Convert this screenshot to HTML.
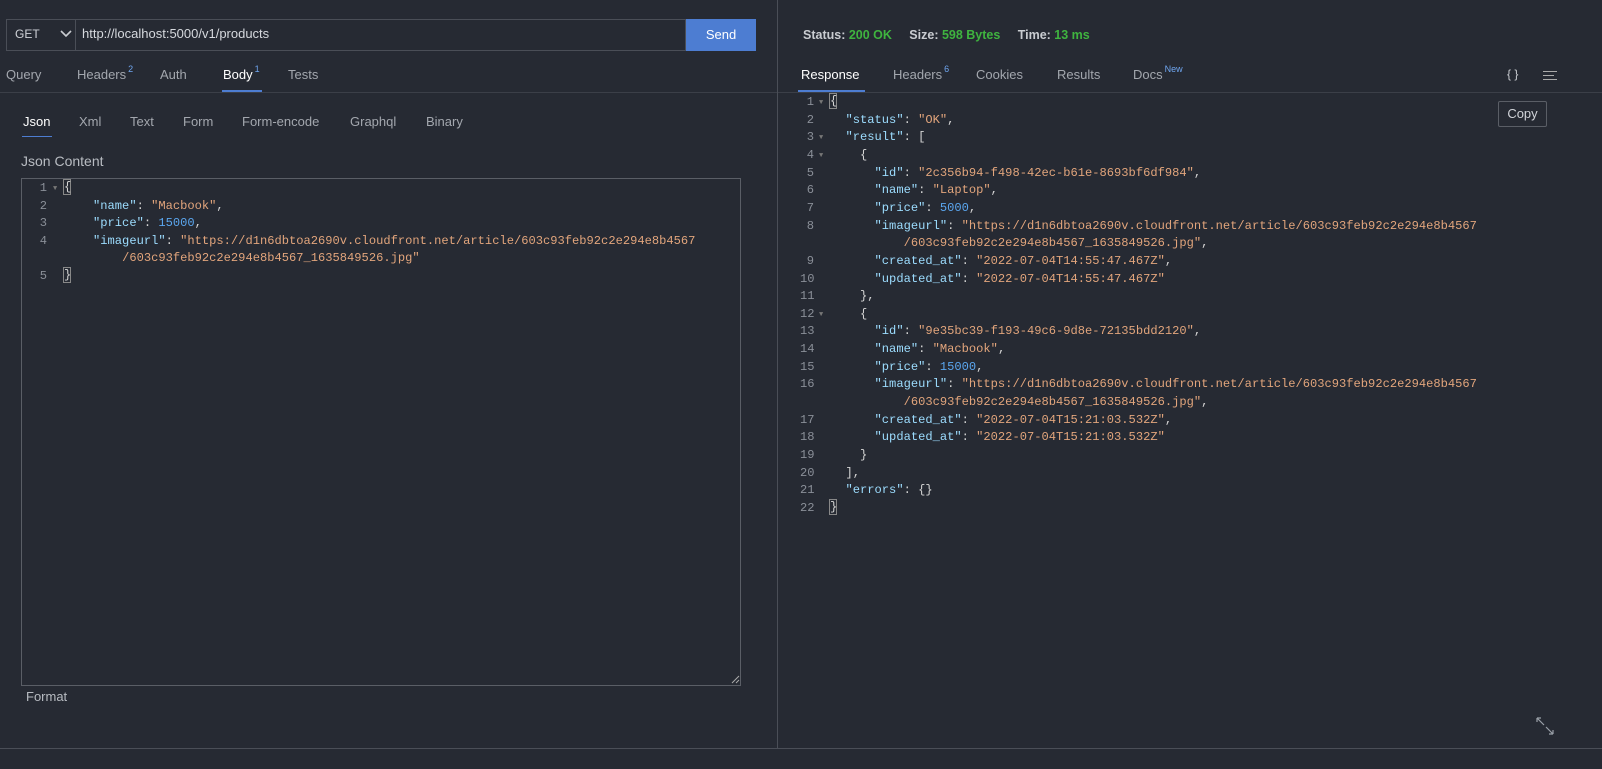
<!DOCTYPE html>
<html><head><meta charset="utf-8"><style>
*{margin:0;padding:0;box-sizing:border-box}
body{width:1602px;height:769px;background:#262a33;font-family:"Liberation Sans",sans-serif;color:#c9ccd1;position:relative;overflow:hidden;font-size:13px}
.a{position:absolute;white-space:nowrap}
.tab{position:absolute;top:67px;font-size:13px;color:#a3a7ae}
.sup{font-size:9px;color:#6fa6f0;vertical-align:top;position:relative;top:-3px;margin-left:2px}
.code{position:absolute;font-family:"Liberation Mono",monospace;font-size:12.1px;color:#d4d4d4}
.r{position:absolute;height:18px;line-height:18px;white-space:pre}
.ln{position:absolute;color:#8a8f98;text-align:right;width:14px}
.k{color:#9cdcfe}.s{color:#e2a57c}.n{color:#5ba7f0}
.ar{color:#777;font-size:7px;position:absolute;margin-left:3px;margin-top:1px}
</style></head><body>
<div class="a" style="left:6px;top:19px;width:680px;height:32px;border:1px solid #4a4e57"></div>
<div class="a" style="left:75px;top:20px;width:1px;height:30px;background:#4a4e57"></div>
<div class="a" style="left:15px;top:27px;font-size:12px;color:#d0d3d8">GET</div>
<svg class="a" style="left:60px;top:30px" width="12" height="8"><path d="M1 1 L6 6 L11 1" stroke="#c9ccd1" stroke-width="1.6" fill="none"/></svg>
<div class="a" style="left:82px;top:26px;font-size:13px;color:#d6d9de">http://localhost:5000/v1/products</div>
<div class="a" style="left:686px;top:19px;width:70px;height:32px;background:#4d7dd2;color:#fff;font-size:13px;line-height:32px;text-align:center">Send</div>
<div class="tab" style="left:6px">Query</div>
<div class="tab" style="left:77px">Headers<span class="sup">2</span></div>
<div class="tab" style="left:160px">Auth</div>
<div class="tab" style="left:223px;color:#fff">Body<span class="sup">1</span></div>
<div class="a" style="left:222px;top:90px;width:40px;height:2px;background:#4d7dd2"></div>
<div class="tab" style="left:288px">Tests</div>
<div class="a" style="left:0;top:92px;width:777px;height:1px;background:#3b3f48"></div>
<div class="a" style="left:23px;top:114px;color:#fff">Json</div>
<div class="a" style="left:22px;top:136px;width:30px;height:1px;background:#4d7dd2"></div>
<div class="a" style="left:79px;top:114px;color:#a3a7ae">Xml</div>
<div class="a" style="left:130px;top:114px;color:#a3a7ae">Text</div>
<div class="a" style="left:183px;top:114px;color:#a3a7ae">Form</div>
<div class="a" style="left:242px;top:114px;color:#a3a7ae">Form-encode</div>
<div class="a" style="left:350px;top:114px;color:#a3a7ae">Graphql</div>
<div class="a" style="left:426px;top:114px;color:#a3a7ae">Binary</div>
<div class="a" style="left:21px;top:153px;font-size:14px;color:#b8bcc2">Json Content</div>
<div class="a" style="left:21px;top:178px;width:720px;height:508px;border:1px solid #5a5e66"></div>
<svg class="a" style="left:730px;top:674px" width="10" height="10"><path d="M2 9 L9 2 M6 9 L9 6" stroke="#aaa" stroke-width="1"/></svg>
<div class="code" style="left:0;top:179px">
<div class="ln r" style="left:33px;top:0">1</div><span class="ar" style="left:50px;top:5px">▼</span>
<div class="r" style="left:63px;top:0;border:1px solid #888;width:8px;height:16px;line-height:14px">{</div>
<div class="ln r" style="left:33px;top:17.6px">2</div><div class="r" style="left:64px;top:17.6px">    <span class="k">"name"</span>: <span class="s">"Macbook"</span>,</div>
<div class="ln r" style="left:33px;top:35.2px">3</div><div class="r" style="left:64px;top:35.2px">    <span class="k">"price"</span>: <span class="n">15000</span>,</div>
<div class="ln r" style="left:33px;top:52.8px">4</div><div class="r" style="left:64px;top:52.8px">    <span class="k">"imageurl"</span>: <span class="s">"https://d1n6dbtoa2690v.cloudfront.net/article/603c93feb92c2e294e8b4567</span></div>
<div class="r" style="left:64px;top:70.4px">        <span class="s">/603c93feb92c2e294e8b4567_1635849526.jpg"</span></div>
<div class="ln r" style="left:33px;top:88px">5</div>
<div class="r" style="left:63px;top:88px;border:1px solid #888;width:8px;height:16px;line-height:14px">}</div>
</div>
<div class="a" style="left:26px;top:689px;color:#b8bcc2">Format</div>
<div class="a" style="left:777px;top:0;width:1px;height:748px;background:#4a4e57"></div>
<div class="a" style="left:0;top:748px;width:1602px;height:1px;background:#4a4e57"></div>
<div class="a" style="left:803px;top:28px;font-size:12.5px;font-weight:bold;color:#c9ccd1">Status: <span style="color:#3fb43f">200 OK</span>&nbsp;&nbsp;&nbsp;&nbsp; Size: <span style="color:#3fb43f">598 Bytes</span>&nbsp;&nbsp;&nbsp;&nbsp; Time: <span style="color:#3fb43f">13 ms</span></div>
<div class="tab" style="left:801px;color:#fff">Response</div>
<div class="a" style="left:798px;top:90px;width:67px;height:2px;background:#4d7dd2"></div>
<div class="tab" style="left:893px">Headers<span class="sup">6</span></div>
<div class="tab" style="left:976px">Cookies</div>
<div class="tab" style="left:1057px">Results</div>
<div class="tab" style="left:1133px">Docs<span class="sup">New</span></div>
<div class="a" style="left:1507px;top:67px;font-size:12px;color:#c9ccd1">{ }</div>
<svg class="a" style="left:1543px;top:70px" width="15" height="11"><path d="M0 1.5H14M0 5.5H11M0 9.5H14" stroke="#aaa" stroke-width="1"/></svg>
<div class="a" style="left:778px;top:92px;width:824px;height:1px;background:#3b3f48"></div>
<div class="a" style="left:1498px;top:101px;width:49px;height:26px;border:1px solid #5a5e66;border-radius:2px;color:#d0d3d8;font-size:13px;line-height:24px;text-align:center">Copy</div>
<div class="code" style="left:0;top:93px">
<div class="ln r" style="left:800px;top:0">1</div><span class="ar" style="left:816px;top:5px">▼</span>
<div class="r" style="left:829px;top:0;border:1px solid #888;width:8px;height:16px;line-height:14px">{</div>
<div class="ln r" style="left:800px;top:17.65px">2</div><div class="r" style="left:831px;top:17.65px">  <span class="k">"status"</span>: <span class="s">"OK"</span>,</div>
<div class="ln r" style="left:800px;top:35.3px">3</div><span class="ar" style="left:816px;top:40px">▼</span><div class="r" style="left:831px;top:35.3px">  <span class="k">"result"</span>: [</div>
<div class="ln r" style="left:800px;top:52.95px">4</div><span class="ar" style="left:816px;top:58px">▼</span><div class="r" style="left:831px;top:52.95px">    {</div>
<div class="ln r" style="left:800px;top:70.6px">5</div><div class="r" style="left:831px;top:70.6px">      <span class="k">"id"</span>: <span class="s">"2c356b94-f498-42ec-b61e-8693bf6df984"</span>,</div>
<div class="ln r" style="left:800px;top:88.25px">6</div><div class="r" style="left:831px;top:88.25px">      <span class="k">"name"</span>: <span class="s">"Laptop"</span>,</div>
<div class="ln r" style="left:800px;top:105.9px">7</div><div class="r" style="left:831px;top:105.9px">      <span class="k">"price"</span>: <span class="n">5000</span>,</div>
<div class="ln r" style="left:800px;top:123.55px">8</div><div class="r" style="left:831px;top:123.55px">      <span class="k">"imageurl"</span>: <span class="s">"https://d1n6dbtoa2690v.cloudfront.net/article/603c93feb92c2e294e8b4567</span></div>
<div class="r" style="left:831px;top:141.2px">          <span class="s">/603c93feb92c2e294e8b4567_1635849526.jpg"</span>,</div>
<div class="ln r" style="left:800px;top:158.85px">9</div><div class="r" style="left:831px;top:158.85px">      <span class="k">"created_at"</span>: <span class="s">"2022-07-04T14:55:47.467Z"</span>,</div>
<div class="ln r" style="left:800px;top:176.5px">10</div><div class="r" style="left:831px;top:176.5px">      <span class="k">"updated_at"</span>: <span class="s">"2022-07-04T14:55:47.467Z"</span></div>
<div class="ln r" style="left:800px;top:194.15px">11</div><div class="r" style="left:831px;top:194.15px">    },</div>
<div class="ln r" style="left:800px;top:211.8px">12</div><span class="ar" style="left:816px;top:217px">▼</span><div class="r" style="left:831px;top:211.8px">    {</div>
<div class="ln r" style="left:800px;top:229.45px">13</div><div class="r" style="left:831px;top:229.45px">      <span class="k">"id"</span>: <span class="s">"9e35bc39-f193-49c6-9d8e-72135bdd2120"</span>,</div>
<div class="ln r" style="left:800px;top:247.1px">14</div><div class="r" style="left:831px;top:247.1px">      <span class="k">"name"</span>: <span class="s">"Macbook"</span>,</div>
<div class="ln r" style="left:800px;top:264.75px">15</div><div class="r" style="left:831px;top:264.75px">      <span class="k">"price"</span>: <span class="n">15000</span>,</div>
<div class="ln r" style="left:800px;top:282.4px">16</div><div class="r" style="left:831px;top:282.4px">      <span class="k">"imageurl"</span>: <span class="s">"https://d1n6dbtoa2690v.cloudfront.net/article/603c93feb92c2e294e8b4567</span></div>
<div class="r" style="left:831px;top:300.05px">          <span class="s">/603c93feb92c2e294e8b4567_1635849526.jpg"</span>,</div>
<div class="ln r" style="left:800px;top:317.7px">17</div><div class="r" style="left:831px;top:317.7px">      <span class="k">"created_at"</span>: <span class="s">"2022-07-04T15:21:03.532Z"</span>,</div>
<div class="ln r" style="left:800px;top:335.35px">18</div><div class="r" style="left:831px;top:335.35px">      <span class="k">"updated_at"</span>: <span class="s">"2022-07-04T15:21:03.532Z"</span></div>
<div class="ln r" style="left:800px;top:353px">19</div><div class="r" style="left:831px;top:353px">    }</div>
<div class="ln r" style="left:800px;top:370.65px">20</div><div class="r" style="left:831px;top:370.65px">  ],</div>
<div class="ln r" style="left:800px;top:388.3px">21</div><div class="r" style="left:831px;top:388.3px">  <span class="k">"errors"</span>: {}</div>
<div class="ln r" style="left:800px;top:405.95px">22</div>
<div class="r" style="left:829px;top:405.95px;border:1px solid #888;width:8px;height:16px;line-height:14px">}</div>
</div>
<svg class="a" style="left:1535px;top:716px" width="20" height="20"><path d="M2 2 L9 9 M2 2 H6 M2 2 V6 M18 18 L11 11 M18 18 H14 M18 18 V14" stroke="#9aa0a8" stroke-width="1.2" fill="none"/></svg>
</body></html>
